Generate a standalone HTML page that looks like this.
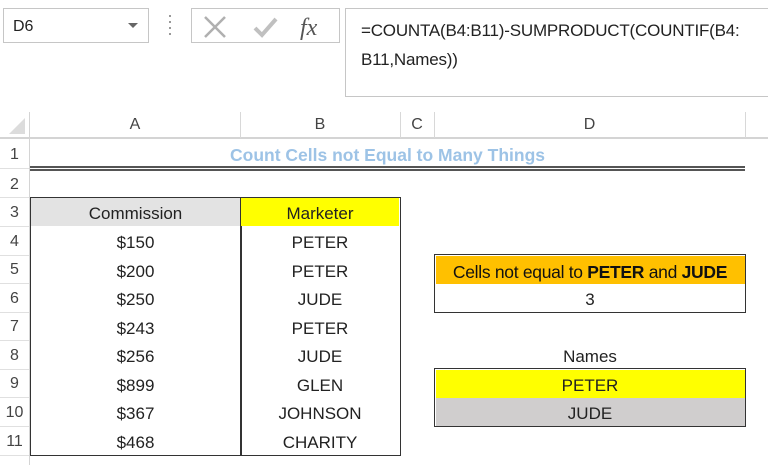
<!DOCTYPE html>
<html><head><meta charset="utf-8"><style>
body{margin:0;width:768px;height:465px;overflow:hidden;background:#fff;font-family:"Liberation Sans",sans-serif;position:relative}
.a{position:absolute;box-sizing:border-box}
.c{position:absolute;box-sizing:border-box;text-align:center;font-size:17px;color:#222;line-height:28px;padding-top:2px}
.rh{position:absolute;left:0;width:29px;text-align:center;font-size:16px;color:#444;border-bottom:1px solid #e0e0e0}
.ch{position:absolute;top:112px;height:26px;line-height:26px;text-align:center;font-size:16px;color:#444;border-right:1px solid #d8d8d8}
</style></head><body>
<div class="a" style="left:3px;top:8px;width:146px;height:35px;border:1px solid #c6c6c6;font-size:16px;line-height:35px;padding-left:9px;color:#222">D6</div>
<div class="a" style="left:128px;top:23px;width:0;height:0;border-left:5px solid transparent;border-right:5px solid transparent;border-top:5px solid #666"></div>
<div class="a" style="left:169px;top:15px;width:2px;height:20px;background:repeating-linear-gradient(#999 0 2px,transparent 2px 6px)"></div>
<div class="a" style="left:191px;top:8px;width:149px;height:35px;border:1px solid #c6c6c6"></div>
<svg class="a" style="left:200px;top:14px" width="140" height="26"><path d="M5 3L25 23M25 3L5 23" stroke="#b0b0b0" stroke-width="2.5"/><path d="M55 14L62 21L76 5" stroke="#c0c0c0" stroke-width="4" fill="none"/><text x="100" y="21" font-family="Liberation Serif" font-style="italic" font-size="24" fill="#555">fx</text></svg>
<div class="a" style="left:345px;top:8px;width:430px;height:89px;border:1px solid #c6c6c6;font-size:17px;line-height:29px;padding:7px 0 0 15px;color:#222;letter-spacing:-0.2px">=COUNTA(B4:B11)-SUMPRODUCT(COUNTIF(B4:<br>B11,Names))</div>
<div class="a" style="left:0;top:137px;width:768px;height:2px;background:#d4d4d4"></div>
<div class="a" style="left:29px;top:112px;width:1px;height:353px;background:#d4d4d4"></div>
<svg class="a" style="left:8px;top:117px" width="18" height="18"><path d="M17 1V17H1Z" fill="#dcdcdc"/></svg>
<div class="ch" style="left:30px;width:210px">A</div>
<div class="ch" style="left:240px;width:160px">B</div>
<div class="ch" style="left:400px;width:34px">C</div>
<div class="ch" style="left:434px;width:311px">D</div>
<div class="rh" style="top:139px;height:29px;line-height:32px">1</div>
<div class="rh" style="top:169px;height:28px;line-height:32px">2</div>
<div class="rh" style="top:197px;height:28.6px;line-height:32px">3</div>
<div class="rh" style="top:226px;height:28.6px;line-height:32px">4</div>
<div class="rh" style="top:254px;height:28.6px;line-height:32px">5</div>
<div class="rh" style="top:283px;height:28.6px;line-height:32px">6</div>
<div class="rh" style="top:311px;height:28.6px;line-height:32px">7</div>
<div class="rh" style="top:340px;height:28.6px;line-height:32px">8</div>
<div class="rh" style="top:368px;height:28.6px;line-height:32px">9</div>
<div class="rh" style="top:397px;height:28.6px;line-height:32px">10</div>
<div class="rh" style="top:426px;height:28.6px;line-height:32px">11</div>
<div class="a" style="left:30px;top:139px;width:715px;height:28px;text-align:center;font-weight:bold;color:#9dc3e6;font-size:17.5px;line-height:32px">Count Cells not Equal to Many Things</div>
<div class="a" style="left:30px;top:166px;width:715px;height:5px;border-top:2px solid #555;border-bottom:2px solid #555"></div>
<div class="a" style="left:30px;top:197px;width:371px;height:259px;border:1.5px solid #333"></div>
<div class="a" style="left:240px;top:197px;width:1.5px;height:259px;background:#333"></div>
<div class="c" style="left:31px;top:198px;width:209px;height:28px;background:#e3e3e3">Commission</div>
<div class="c" style="left:241px;top:198px;width:158px;height:28px;background:#ffff00">Marketer</div>
<div class="c" style="left:31px;top:227px;width:209px">$150</div><div class="c" style="left:241px;top:227px;width:158px">PETER</div>
<div class="c" style="left:31px;top:256px;width:209px">$200</div><div class="c" style="left:241px;top:256px;width:158px">PETER</div>
<div class="c" style="left:31px;top:284px;width:209px">$250</div><div class="c" style="left:241px;top:284px;width:158px">JUDE</div>
<div class="c" style="left:31px;top:313px;width:209px">$243</div><div class="c" style="left:241px;top:313px;width:158px">PETER</div>
<div class="c" style="left:31px;top:341px;width:209px">$256</div><div class="c" style="left:241px;top:341px;width:158px">JUDE</div>
<div class="c" style="left:31px;top:370px;width:209px">$899</div><div class="c" style="left:241px;top:370px;width:158px">GLEN</div>
<div class="c" style="left:31px;top:398px;width:209px">$367</div><div class="c" style="left:241px;top:398px;width:158px">JOHNSON</div>
<div class="c" style="left:31px;top:427px;width:209px">$468</div><div class="c" style="left:241px;top:427px;width:158px">CHARITY</div>
<div class="a" style="left:434px;top:254px;width:312px;height:59px;border:1.5px solid #333"></div>
<div class="c" style="left:435.5px;top:255.5px;width:309px;height:28px;background:#ffc000;color:#111;font-size:17.5px;letter-spacing:-0.3px;white-space:nowrap">Cells not equal to <b>PETER</b> and <b>JUDE</b></div>
<div class="c" style="left:435px;top:284px;width:310px">3</div>
<div class="c" style="left:434px;top:341px;width:312px">Names</div>
<div class="a" style="left:434px;top:368px;width:312px;height:59px;border:1.5px solid #333"></div>
<div class="c" style="left:435.5px;top:369.5px;width:309px;height:28px;background:#ffff00">PETER</div>
<div class="c" style="left:435.5px;top:397.5px;width:309px;height:28px;background:#d0cece">JUDE</div>
</body></html>
